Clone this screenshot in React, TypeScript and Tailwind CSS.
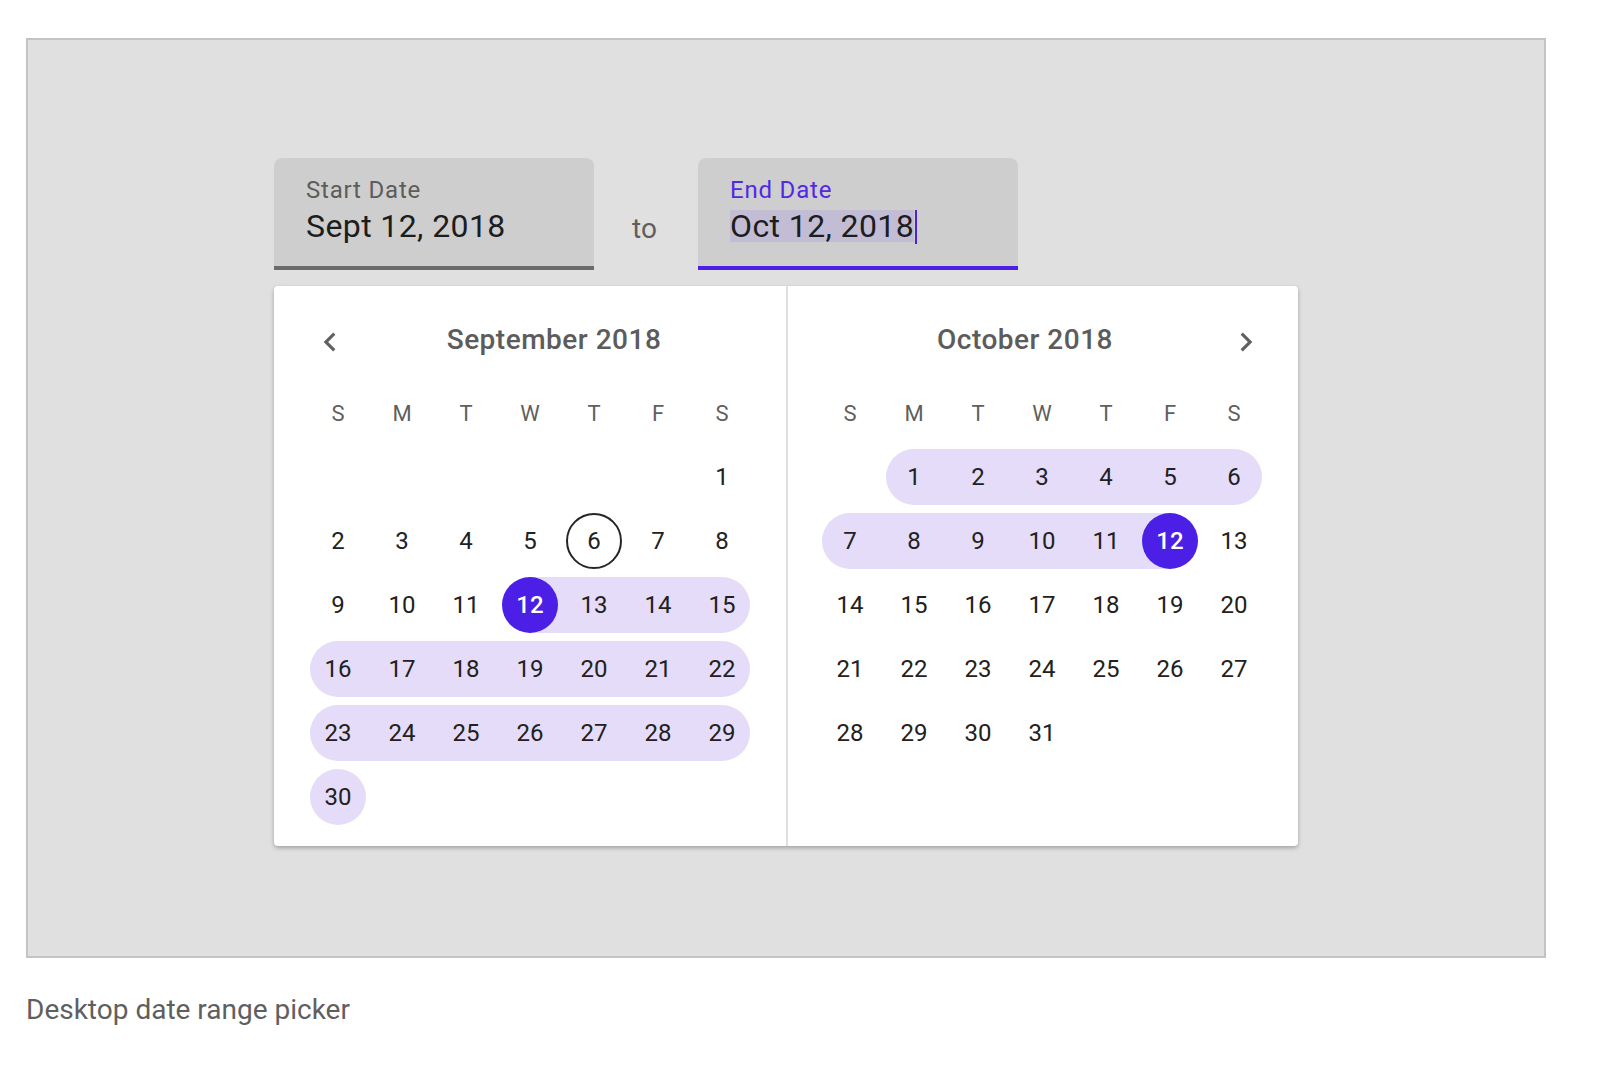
import type { FC } from "react";

type Band = "none" | "mid" | "start" | "end" | "both" | "halfRight" | "halfLeft";

const PURPLE = "bg-[#4b1fe6]";
const RANGE = "bg-[#e4dcf9]";
const WEEK = ["S", "M", "T", "W", "T", "F", "S"];

const bandClass: Record<Band, string> = {
  none: "",
  mid: "h-14 justify-self-stretch",
  start: "h-14 justify-self-stretch ml-1 rounded-l-full",
  end: "h-14 justify-self-stretch mr-1 rounded-r-full",
  both: "h-14 w-14 rounded-full",
  halfRight: "h-14 w-8 justify-self-end",
  halfLeft: "h-14 w-8 justify-self-start",
};

const DayCell: FC<{ day?: number; band?: Band; selected?: boolean; today?: boolean }> = ({
  day,
  band = "none",
  selected,
  today,
}) => (
  <div className="grid h-16 w-16 place-items-center">
    {band !== "none" && <div className={`col-start-1 row-start-1 ${RANGE} ${bandClass[band]}`} />}
    {selected && <div className={`col-start-1 row-start-1 h-14 w-14 rounded-full ${PURPLE}`} />}
    {today && <div className="col-start-1 row-start-1 h-14 w-14 rounded-full border-2 border-[#262626]" />}
    {day && (
      <span
        className={`col-start-1 row-start-1 text-[24px] leading-none ${
          selected ? "font-medium text-white" : "text-[#212121]"
        }`}
      >
        {day}
      </span>
    )}
  </div>
);

const ChevronLeft = () => (
  <svg width="38" height="38" viewBox="0 0 24 24" className="mt-[3px]">
    <path d="M15.41 7.41L14 6l-6 6 6 6 1.41-1.41L10.83 12z" fill="#616161" />
  </svg>
);

const ChevronRight = () => (
  <svg width="38" height="38" viewBox="0 0 24 24" className="mt-[3px]">
    <path d="M10 6L8.59 7.41 13.17 12l-4.58 4.59L10 18l6-6z" fill="#616161" />
  </svg>
);

// build weeks for a month: offset = weekday of the 1st
const buildWeeks = (offset: number, days: number, cell: (d: number, col: number) => JSX.Element) => {
  const cells: (JSX.Element | null)[] = [];
  for (let i = 0; i < offset; i++) cells.push(null);
  for (let d = 1; d <= days; d++) cells.push(cell(d, (d - 1 + offset) % 7));
  while (cells.length % 7) cells.push(null);
  const rows = [];
  for (let r = 0; r < cells.length; r += 7) rows.push(cells.slice(r, r + 7));
  return rows;
};

const septCell = (d: number, col: number) => {
  if (d < 12) return <DayCell key={d} day={d} today={d === 6} />;
  if (d === 12) return <DayCell key={d} day={d} band="halfRight" selected />;
  const s = col === 0;
  const e = col === 6 || d === 30;
  const band: Band = s && e ? "both" : s ? "start" : e ? "end" : "mid";
  return <DayCell key={d} day={d} band={band} />;
};

const octCell = (d: number, col: number) => {
  if (d > 12) return <DayCell key={d} day={d} />;
  if (d === 12) return <DayCell key={d} day={d} band="halfLeft" selected />;
  const s = col === 0 || d === 1;
  const e = col === 6;
  const band: Band = s && e ? "both" : s ? "start" : e ? "end" : "mid";
  return <DayCell key={d} day={d} band={band} />;
};

const MonthGrid: FC<{ rows: (JSX.Element | null)[][] }> = ({ rows }) => (
  <>
    <div className="mt-[9px] flex">
      {WEEK.map((w, i) => (
        <div key={i} className="flex h-16 w-16 items-center justify-center text-[22px] text-[#5f5f5f]">
          {w}
        </div>
      ))}
    </div>
    <div className="flex flex-col">
      {rows.map((row, r) => (
        <div key={r} className="flex">
          {row.map((c, i) => c ?? <DayCell key={`e${i}`} />)}
        </div>
      ))}
    </div>
  </>
);

const App: FC = () => {
  const sept = buildWeeks(6, 30, septCell);
  const oct = buildWeeks(1, 31, octCell);

  return (
    <div className="min-h-screen bg-white pl-[26px] pt-[38px] font-['Roboto',sans-serif]">
      <div className="flex h-[920px] w-[1520px] flex-col items-center border-2 border-[#c4c4c4] bg-[#e0e0e0] pt-[118px]">
        <div className="w-[1024px]">
          {/* inputs */}
          <div className="flex">
            <div className="h-[112px] w-[320px] rounded-t-[8px] border-b-4 border-[#6b6b6b] bg-[#cecece] pl-8 pt-[18px]">
              <div className="text-[24px] leading-[28px] tracking-[0.8px] text-[#5c5c5c]">Start Date</div>
              <div className="mt-[6px] text-[32px] leading-[32px] tracking-[0.4px] text-[#1d1d1d]">Sept 12, 2018</div>
            </div>
            <div className="flex w-[104px] justify-center pt-[55px] pr-[3px] text-[28px] leading-[32px] text-[#5f5f5f]">to</div>
            <div className="h-[112px] w-[320px] rounded-t-[8px] border-b-4 border-[#4b1fe6] bg-[#cecece] pl-8 pt-[18px]">
              <div className="text-[24px] leading-[28px] tracking-[0.8px] text-[#5327e6]">End Date</div>
              <div className="mt-[6px] flex items-start">
                <span className="inline-block bg-[#c2bdd4] text-[32px] leading-[32px] tracking-[0.4px] text-[#1d1d1d]">
                  Oct 12, 2018
                </span>
                <span className="ml-[1px] h-[34px] w-[2px] bg-[#4b1fe6]" />
              </div>
            </div>
          </div>

          {/* calendar card */}
          <div className="mt-4 flex h-[560px] rounded-[4px] bg-white shadow-[0_2px_4px_rgba(0,0,0,0.28)]">
            <div className="w-[512px] px-8 pt-[22px]">
              <div className="flex h-16 items-center">
                <div className="flex w-12 justify-center">
                  <ChevronLeft />
                </div>
                <div className="flex-1 text-center text-[28px] font-medium tracking-[0.5px] text-[#5c5c5c]">
                  September 2018
                </div>
              </div>
              <MonthGrid rows={sept} />
            </div>
            <div className="w-[2px] bg-[#e0e0e0]" />
            <div className="flex-1 pl-[30px] pr-8 pt-[22px]">
              <div className="flex h-16 items-center">
                <div className="ml-[14px] flex-1 text-center text-[28px] font-medium tracking-[0.5px] text-[#5c5c5c]">
                  October 2018
                </div>
                <div className="flex w-12 justify-center pl-2">
                  <ChevronRight />
                </div>
              </div>
              <MonthGrid rows={oct} />
            </div>
          </div>
        </div>
      </div>
      <div className="mt-[34px] text-[28px] leading-[36px] text-[#5f5f5f]">Desktop date range picker</div>
    </div>
  );
};

export default App;
